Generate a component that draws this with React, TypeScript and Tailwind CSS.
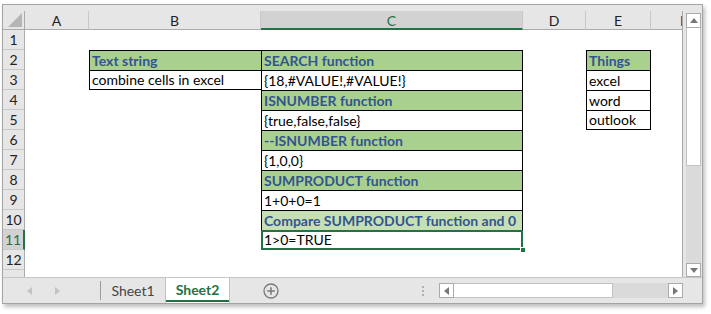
import React from "react";

type Kind = "h" | "hl" | "d";
type Cell = { t: string; k: Kind };

const data: Record<string, Cell> = {
  "2-1": { t: "Text string", k: "h" },
  "2-2": { t: "SEARCH function", k: "h" },
  "2-4": { t: "Things", k: "h" },
  "3-1": { t: "combine cells in excel", k: "d" },
  "3-2": { t: "{18,#VALUE!,#VALUE!}", k: "d" },
  "3-4": { t: "excel", k: "d" },
  "4-2": { t: "ISNUMBER function", k: "h" },
  "4-4": { t: "word", k: "d" },
  "5-2": { t: "{true,false,false}", k: "d" },
  "5-4": { t: "outlook", k: "d" },
  "6-2": { t: "--ISNUMBER function", k: "h" },
  "7-2": { t: "{1,0,0}", k: "d" },
  "8-2": { t: "SUMPRODUCT function", k: "h" },
  "9-2": { t: "1+0+0=1", k: "d" },
  "10-2": { t: "Compare SUMPRODUCT function and 0", k: "hl" },
  "11-2": { t: "1>0=TRUE", k: "d" },
};

const isB = (r: number, c: number) => !!data[`${r}-${c}`];

const colLetters = ["A", "B", "C", "D", "E", "F"];

function GridCell({ r, c }: { r: number; c: number }) {
  const cell = data[`${r}-${c}`];
  if (!cell) return <div className="bg-white" />;
  const cls = ["relative flex items-center pl-[2px] whitespace-nowrap overflow-visible border-black"];
  cls.push("border-l border-t");
  if (!isB(r, c + 1)) cls.push("border-r");
  if (!isB(r + 1, c)) cls.push("border-b");
  if (cell.k === "h") cls.push("bg-[#a9d08e] font-bold text-[#34548f]");
  else if (cell.k === "hl") cls.push("bg-[#c6e0b4] font-bold text-[#34548f]");
  else cls.push("bg-white text-black");
  const sel = r === 11 && c === 2;
  return (
    <div className={cls.join(" ")}>
      <span className="relative z-10">{cell.t}</span>
      {sel && (
        <>
          <div className="absolute -left-px -top-px -right-px -bottom-px border-2 border-[#217346]" />
          <div className="absolute -right-[4px] -bottom-[4px] w-[6px] h-[6px] bg-[#217346] border border-white z-20" />
        </>
      )}
    </div>
  );
}

export default function App() {
  const rows = Array.from({ length: 12 }, (_, i) => i + 1);
  return (
    <div className="w-[711px] h-[314px] bg-white font-['Lato',sans-serif] text-[14px] leading-none overflow-hidden">
      <div className="ml-[2px] mt-[4px] w-[701px] h-[300px] border border-[#a3a3a3] bg-[#e6e6e6] shadow-[2px_3px_4px_rgba(0,0,0,0.25)] flex flex-col">
        <div className="h-[6px]" />
        <div className="flex h-[266px]">
          {/* grid */}
          <div className="w-[680px] h-[266px] overflow-hidden border-r border-[#a8a8a8] bg-white">
            <div className="grid grid-cols-[22px_64px_172px_262px_63px_65px_31px] grid-rows-[19px_repeat(12,20px)_7px] w-[679px]">
              {/* corner */}
              <div className="bg-[#e6e6e6] border-r border-b border-[#ababab] flex items-end justify-end pr-[2px] pb-[2px]">
                <svg width="14" height="14" viewBox="0 0 14 14">
                  <polygon points="14,0 14,14 0,14" fill="#b5b5b5" />
                </svg>
              </div>
              {colLetters.map((l, i) =>
                i === 2 ? (
                  <div key={l} className="bg-[#d2d2d2] border-r border-[#c8c8c8] border-b-2 border-b-[#217346] flex items-center justify-center text-[#217346] pt-[2px]">
                    {l}
                  </div>
                ) : i === 5 ? (
                  <div key={l} className="bg-[#e6e6e6] border-b border-b-[#ababab] flex items-center justify-start overflow-hidden text-[#5a1a1a] pt-px pl-[29px]">
                    {l}
                  </div>
                ) : (
                  <div key={l} className="bg-[#e6e6e6] border-r border-[#c8c8c8] border-b border-b-[#ababab] flex items-center justify-center text-[#222] pt-px">
                    {l}
                  </div>
                )
              )}
              {rows.map((r) => (
                <React.Fragment key={r}>
                  {r === 11 ? (
                    <div className="bg-[#d2d2d2] border-r-2 border-[#217346] border-b border-b-[#c8c8c8] flex items-center justify-center text-[#217346]">
                      {r}
                    </div>
                  ) : (
                    <div className="bg-[#e6e6e6] border-r border-[#ababab] border-b border-b-[#c8c8c8] flex items-center justify-center text-[#222]">
                      {r}
                    </div>
                  )}
                  {colLetters.map((_, c) => (
                    <GridCell key={c} r={r} c={c} />
                  ))}
                </React.Fragment>
              ))}
              <div className="bg-[#e6e6e6] border-r border-[#ababab]" />
            </div>
          </div>
          {/* vertical scrollbar */}
          <div className="w-[19px] flex flex-col pl-[3px] pr-[1px] pt-[2px]">
            <div className="h-[15px] bg-white border border-[#ababab] flex items-center justify-center">
              <svg width="8" height="5" viewBox="0 0 8 5"><polygon points="4,0 8,5 0,5" fill="#777" /></svg>
            </div>
            <div className="h-[138px] bg-white border-x border-b border-[#c2c2c2]" />
            <div className="flex-1 bg-[#dadada]" />
            <div className="h-[14px] bg-white border border-[#ababab] flex items-center justify-center">
              <svg width="8" height="5" viewBox="0 0 8 5"><polygon points="0,0 8,0 4,5" fill="#777" /></svg>
            </div>
          </div>
        </div>
        {/* bottom bar */}
        <div className="flex-1 flex items-stretch border-t border-[#c6c6c6]">
          <div className="w-[97px] flex items-center">
            <svg className="ml-[24px]" width="5" height="8" viewBox="0 0 5 8"><polygon points="5,0 5,8 0,4" fill="#c3c3c3" /></svg>
            <svg className="ml-[23px]" width="5" height="8" viewBox="0 0 5 8"><polygon points="0,0 5,4 0,8" fill="#c3c3c3" /></svg>
          </div>
          <div className="flex items-center">
            <div className="w-px h-[19px] bg-[#9c9c9c]" />
          </div>
          <div className="w-[64px] flex items-center justify-center text-[#444] pt-px">Sheet1</div>
          <div className="w-[65px] bg-white border-x border-[#c4c4c4] flex flex-col">
            <div className="flex-1 flex items-center justify-center font-bold text-[#217346] pt-[2px]">Sheet2</div>
            <div className="h-[2px] bg-[#217346] mb-px" />
          </div>
          <div className="flex items-center ml-[33px]">
            <svg width="16" height="16" viewBox="0 0 16 16">
              <circle cx="8" cy="8" r="7" fill="none" stroke="#7a7a7a" strokeWidth="1.3" />
              <path d="M8 4.2v7.6M4.2 8h7.6" stroke="#7a7a7a" strokeWidth="1.5" />
            </svg>
          </div>
          <div className="flex-1" />
          <div className="flex flex-col justify-center gap-[2px] mr-[15px]">
            <div className="w-[2px] h-[2px] bg-[#b0b0b0]" />
            <div className="w-[2px] h-[2px] bg-[#b0b0b0]" />
            <div className="w-[2px] h-[2px] bg-[#b0b0b0]" />
          </div>
          <div className="flex items-center">
            <div className="w-[15px] h-[15px] bg-white border border-[#ababab] flex items-center justify-center">
              <svg width="5" height="8" viewBox="0 0 5 8"><polygon points="5,0 5,8 0,4" fill="#777" /></svg>
            </div>
            <div className="w-[159px] h-[15px] bg-white border-y border-r border-[#c2c2c2]" />
            <div className="w-[55px] h-[15px] bg-[#dadada]" />
            <div className="w-[15px] h-[15px] bg-white border border-[#ababab] flex items-center justify-center">
              <svg width="5" height="8" viewBox="0 0 5 8"><polygon points="0,0 5,4 0,8" fill="#777" /></svg>
            </div>
          </div>
          <div className="w-[19px]" />
        </div>
      </div>
    </div>
  );
}
